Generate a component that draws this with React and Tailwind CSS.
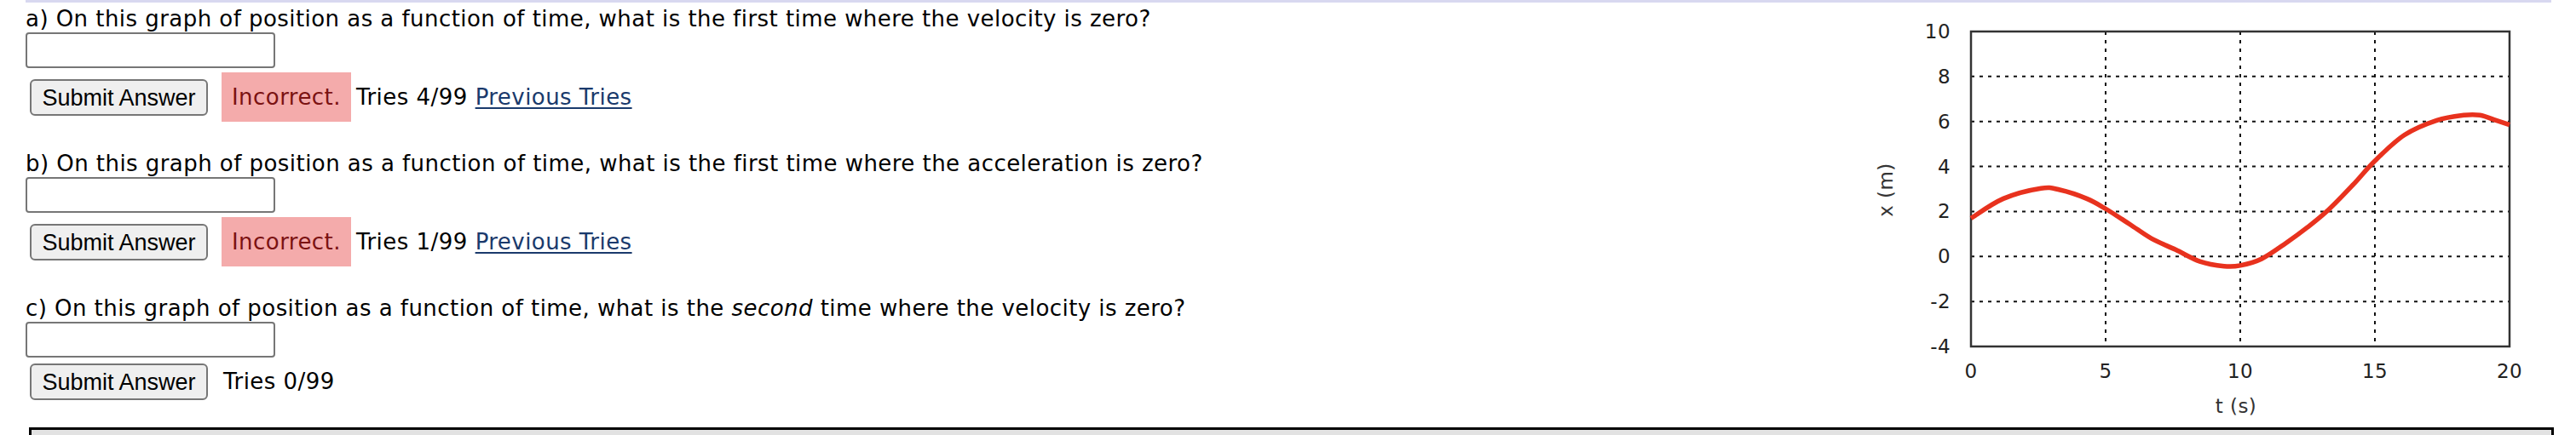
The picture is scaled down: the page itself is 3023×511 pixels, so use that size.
import React from 'react'

const TEXT_FONT = { fontFamily: '"DejaVu Sans", sans-serif' }
const BTN_FONT = { fontFamily: '"Liberation Sans", Arial, sans-serif' }

// plot geometry in page pixels
const X0 = 2313
const X1 = 2945
const Y_TOP = 37
const Y_BOT = 407
const px = (t) => X0 + (t * (X1 - X0)) / 20
const py = (v) => Y_BOT - ((v + 4) * (Y_BOT - Y_TOP)) / 14

const DATA = [
  [0, 1.7], [1.2, 2.57], [2.6, 3.03], [3.3, 2.96], [4.3, 2.57], [5, 2.12],
  [5.9, 1.43], [6.7, 0.8], [7.6, 0.3], [8.5, -0.22], [9.4, -0.43], [10, -0.4],
  [10.8, -0.1], [11.7, 0.6], [12.5, 1.3], [13.3, 2.1], [14.2, 3.2], [15, 4.25],
  [16.1, 5.4], [17.3, 6.05], [18.3, 6.28], [18.9, 6.28], [19.5, 6.05], [20, 5.85],
]

function curvePath() {
  const p = DATA.map(([t, v]) => [px(t), py(v)])
  let d = `M${p[0][0]},${p[0][1]}`
  for (let i = 0; i < p.length - 1; i++) {
    const a = p[i - 1] || p[i]
    const b = p[i]
    const c = p[i + 1]
    const e = p[i + 2] || c
    const c1 = [b[0] + (c[0] - a[0]) / 6, b[1] + (c[1] - a[1]) / 6]
    const c2 = [c[0] - (e[0] - b[0]) / 6, c[1] - (e[1] - b[1]) / 6]
    d += ` C${c1[0]},${c1[1]} ${c2[0]},${c2[1]} ${c[0]},${c[1]}`
  }
  return d
}

function Graph() {
  const yTicks = [10, 8, 6, 4, 2, 0, -2, -4]
  const xTicks = [0, 5, 10, 15, 20]
  return (
    <svg width="820" height="490" viewBox="2174 3 820 490" className="ml-auto shrink-0 block">
      <g fontFamily="'DejaVu Sans', sans-serif" fontSize="23" fill="#222">
        {yTicks.map((v) => (
          <text key={v} x="2289" y={py(v) + 8} textAnchor="end">{v}</text>
        ))}
        {xTicks.map((t) => (
          <text key={t} x={px(t)} y="444" textAnchor="middle">{t}</text>
        ))}
        <text x="2624" y="485" textAnchor="middle" fill="#333">t (s)</text>
        <text x="2221" y="223" textAnchor="middle" fill="#333" transform="rotate(-90 2221 223)">x (m)</text>
      </g>
      <g stroke="#111" strokeWidth="2" strokeDasharray="4 6">
        {[8, 6, 4, 2, 0, -2].map((v) => (
          <line key={v} x1={X0} y1={py(v)} x2={X1} y2={py(v)} />
        ))}
        {[5, 10, 15].map((t) => (
          <line key={t} x1={px(t)} y1={Y_TOP} x2={px(t)} y2={Y_BOT} />
        ))}
      </g>
      <rect x={X0} y={Y_TOP} width={X1 - X0} height={Y_BOT - Y_TOP} fill="none" stroke="#333" strokeWidth="2.5" />
      <path d={curvePath()} fill="none" stroke="#e8321e" strokeWidth="5.5" strokeLinejoin="round" />
    </svg>
  )
}

function SubmitButton() {
  return (
    <button
      type="button"
      style={BTN_FONT}
      className="ml-[5px] w-[209px] h-[43px] shrink-0 rounded-[6px] border-2 border-[#767676] bg-[#efefef] text-[27px] tracking-normal text-black"
    >
      Submit Answer
    </button>
  )
}

function Question({ children, tries, incorrect, last }) {
  return (
    <div className={last ? 'mb-[32px]' : 'mb-[34px]'}>
      <p className="h-[31px] leading-[31px] whitespace-nowrap">{children}</p>
      <input type="text" className="block w-[293px] h-[42px] border-2 border-[#767676] rounded-[4px] bg-white" />
      {incorrect ? (
        <div className="flex items-center h-[58px] mt-[5px] whitespace-nowrap">
          <SubmitButton />
          <span className="ml-[16px] h-[58px] px-[12px] flex items-center bg-[#f4abab] text-[#7b1212]">Incorrect.</span>
          <span className="ml-[6px]">Tries {tries}</span>
          <a href="#" className="ml-[9px] text-[#1a3a6c] underline underline-offset-[3px]">Previous Tries</a>
        </div>
      ) : (
        <div className="flex items-center mt-[7px] whitespace-nowrap">
          <SubmitButton />
          <span className="ml-[18px]">Tries {tries}</span>
        </div>
      )}
    </div>
  )
}

export default function App() {
  return (
    <div className="w-[3023px] bg-white text-black text-[26px] tracking-[0.45px]" style={TEXT_FONT}>
      <div className="ml-[30px] mr-[29px] border-t-[3px] border-[#d8d8f0]">
        <div className="flex items-start">
          <div className="pt-[4px]">
            <Question tries="4/99" incorrect>
              a) On this graph of position as a function of time, what is the first time where the velocity is zero?
            </Question>
            <Question tries="1/99" incorrect>
              b) On this graph of position as a function of time, what is the first time where the acceleration is zero?
            </Question>
            <Question tries="0/99" last>
              c) On this graph of position as a function of time, what is the <em>second</em> time where the velocity is zero?
            </Question>
          </div>
          <Graph />
        </div>
        <div className="ml-[4px] -mr-[3px] h-[40px] border-[3px] border-black bg-[#e2e2e2]" />
      </div>
    </div>
  )
}
